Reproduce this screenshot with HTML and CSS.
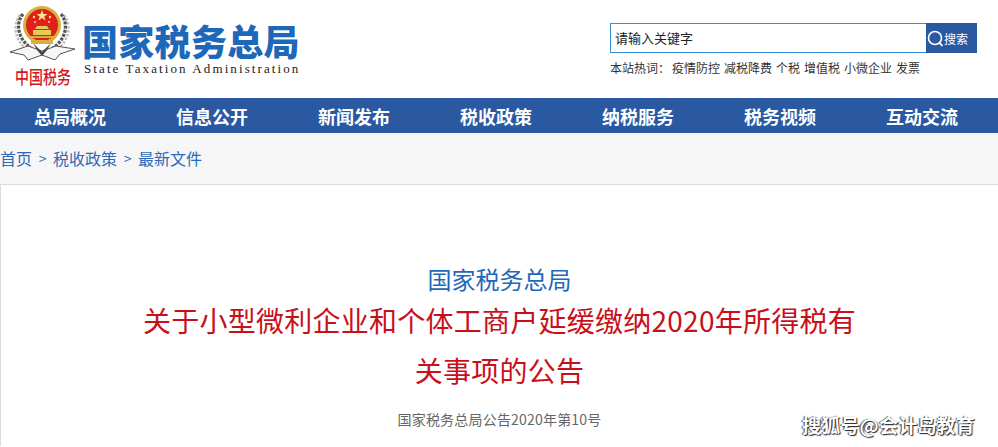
FILE: index.html
```html
<!DOCTYPE html>
<html lang="zh">
<head>
    <meta charset="utf-8">
    <title>国家税务总局</title>
    <link rel="stylesheet" href="styles.css">
</head>
<body>
    <div class="header">
        <div class="logo">
            <div class="emblem">
                <svg width="80" height="62" viewBox="0 0 80 62">
                    <!-- wreath -->
                    <g fill="none" stroke="#bdbdbd" stroke-width="2.500" stroke-dasharray="2.500 1.500">
                        <path d="M20 13C12 24 15 38 27 48"/>
                        <path d="M64 13C72 24 69 38 57 48"/>
                    </g>
                    <g fill="none" stroke="#555" stroke-width="3.200" stroke-dasharray="3 1.200">
                        <path d="M23 12C15 22 18 37 31 46"/>
                        <path d="M61 12C69 22 66 37 53 46"/>
                    </g>
                    <!-- ribbon -->
                    <path d="M10 50L28 44L42 49L56 44L75 47L60 52L55 58L42 53L28 58L24 53Z" fill="#f6f6f6" stroke="#555" stroke-width="1"/>
                    <path d="M33 41L42 50L51 41L47 48L42 54L37 48Z" fill="#444"/>
                    <!-- badge -->
                    <circle cx="42" cy="23" r="19" fill="#d8b040"/>
                    <circle cx="42" cy="23" r="16" fill="#e0201a"/>
                    <rect x="31" y="38" width="22" height="4" fill="#d8b040"/>
                    <!-- stars -->
                    <polygon points="42,8 43.500,12 47.500,12 44.300,14.500 45.500,18.500 42,16 38.500,18.500 39.700,14.500 36.500,12 40.500,12" fill="#f7e58a"/>
                    <circle cx="34" cy="15" r="1.200" fill="#f7e58a"/>
                    <circle cx="50" cy="15" r="1.200" fill="#f7e58a"/>
                    <circle cx="35" cy="20" r="1" fill="#f7e58a"/>
                    <circle cx="49" cy="20" r="1" fill="#f7e58a"/>
                    <!-- gate -->
                    <path d="M37 24H47L49 27H35ZM33 28H51V33H33Z" fill="#e8c95a"/>
                    <path d="M30 34H54V36H30Z" fill="#d8b040"/>
                </svg>
            </div>
            <div class="seal">中国税务</div>
        </div>
        <div class="site-name">
            <div class="name-cn">国家税务总局</div>
            <div class="name-en">State Taxation Administration</div>
        </div>
        <div class="search-area">
            <form class="search-box">
                <input type="text" class="search-input" value="请输入关键字">
                <button type="button" class="search-btn">
                    <svg width="17" height="17" viewBox="0 0 17 17">
                        <circle cx="8" cy="8" r="6.500" fill="none" stroke="#fff" stroke-width="1.600"/>
                        <path d="M12.500 12.800L15.500 15.800" stroke="#fff" stroke-width="1.800"/>
                    </svg>搜索
                </button>
            </form>
            <div class="hot-words">
                <span class="hot-label">本站热词：</span>
                <a>疫情防控</a><a>减税降费</a><a>个税</a><a>增值税</a><a>小微企业</a><a>发票</a>
            </div>
        </div>
    </div>

    <div class="nav">
        <a>总局概况</a>
        <a>信息公开</a>
        <a>新闻发布</a>
        <a>税收政策</a>
        <a>纳税服务</a>
        <a>税务视频</a>
        <a>互动交流</a>
    </div>

    <div class="breadcrumb">
        <a>首页</a><span class="sep">&gt;</span><a>税收政策</a><span class="sep">&gt;</span><a>最新文件</a>
    </div>

    <div class="content">
        <div class="org">国家税务总局</div>
        <h1 class="title">关于小型微利企业和个体工商户延缓缴纳2020年所得税有<br>关事项的公告</h1>
        <div class="doc-no">国家税务总局公告2020年第10号</div>
    </div>

    <div class="watermark">搜狐号@会计岛教育</div>
</body>
</html>
```

FILE: styles.css
```css
html, body {
    margin: 0;
    padding: 0;
    height: 447px;
    overflow: hidden;
}
body {
    position: relative;
    background-color: #fff;
    font-family: "Liberation Sans", "Noto Sans CJK SC", sans-serif;
}
.header {
    display: flex;
    height: 98px;
}
.logo {
    width: 82px;
    flex-shrink: 0;
}
.emblem {
    height: 62px;
    padding-top: 2px;
}
.emblem svg {
    display: block;
}
.seal {
    margin-top: 1px;
    padding-left: 15px;
    color: #d4161c;
    font-family: "Noto Sans CJK SC", sans-serif;
    font-size: 14px;
    font-weight: 500;
    line-height: 22px;
    transform: scaleY(1.3);
}
.site-name {
    width: 528px;
    flex-shrink: 0;
}
.name-cn {
    margin-top: 20px;
    color: #1d68b9;
    font-family: "Noto Sans CJK SC", sans-serif;
    font-size: 36px;
    font-weight: 900;
    letter-spacing: 0.3px;
    line-height: 40px;
}
.name-en {
    margin-top: 2px;
    padding-left: 2px;
    color: #222;
    font-family: "Liberation Serif", serif;
    font-size: 13px;
    letter-spacing: 2.1px;
    line-height: 14px;
    white-space: nowrap;
}
.search-area {
    padding-top: 23px;
}
.search-box {
    display: flex;
    margin: 0;
    height: 30px;
}
.search-input {
    box-sizing: border-box;
    width: 316px;
    height: 30px;
    padding: 0 4px 2px;
    border: 1px solid #3a8fd9;
    border-right: none;
    outline: none;
    color: #222;
    font-family: "Noto Sans CJK SC", sans-serif;
    font-size: 13px;
}
.search-btn {
    display: flex;
    align-items: center;
    width: 51px;
    height: 30px;
    padding: 0 0 0 1px;
    border: none;
    background-color: #2a59a2;
    color: #fff;
    font-family: "Noto Sans CJK SC", sans-serif;
    font-size: 12px;
}
.hot-words {
    display: flex;
    margin-top: 6px;
    color: #333;
    font-family: "Noto Sans CJK SC", sans-serif;
    font-size: 12px;
    line-height: 17px;
}
.hot-label {
    margin-right: 2px;
}
.hot-words a {
    margin-right: 4px;
}
.nav {
    display: flex;
    height: 35px;
    margin-left: -1px;
    background-color: #2a59a2;
}
.nav a {
    width: 142px;
    color: #fff;
    font-family: "Noto Sans CJK SC", sans-serif;
    font-size: 18px;
    font-weight: 700;
    line-height: 37px;
    text-align: center;
}
.breadcrumb {
    display: flex;
    height: 51px;
    border-bottom: 1px solid #dcdcdc;
    background-color: #f6f6f6;
    color: #2a6ab8;
    font-family: "Noto Sans CJK SC", sans-serif;
    font-size: 16px;
    line-height: 50px;
}
.sep {
    width: 21px;
    color: #2a6ab8;
    font-size: 14px;
    text-align: center;
}
.content {
    height: 261px;
    border-left: 1px solid #dcdcdc;
    text-align: center;
}
.org {
    padding-top: 76px;
    color: #1d68b9;
    font-family: "Noto Sans CJK SC", sans-serif;
    font-size: 24px;
    line-height: 36px;
}
.title {
    margin: -2px 0 0;
    color: #c8101a;
    font-family: "Noto Sans CJK SC", sans-serif;
    font-size: 28px;
    font-weight: 400;
    letter-spacing: 0.25px;
    line-height: 50px;
}
.doc-no {
    margin-top: 12px;
    color: #666;
    font-family: "Noto Sans CJK SC", sans-serif;
    font-size: 14px;
    letter-spacing: 0.2px;
    line-height: 24px;
}
.watermark {
    position: absolute;
    left: 802px;
    top: 412px;
    color: #fff;
    font-family: "Noto Sans CJK SC", sans-serif;
    font-size: 19px;
    font-weight: 700;
    letter-spacing: 0.2px;
    line-height: 26px;
    text-shadow: 1px 1px 1px #222, -1px 0 1px #444;
    white-space: nowrap;
}
```
